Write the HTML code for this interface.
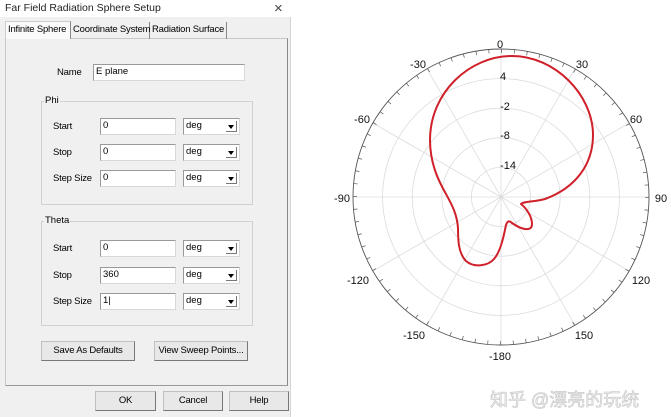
<!DOCTYPE html>
<html><head><meta charset="utf-8"><style>
*{margin:0;padding:0;box-sizing:border-box}
body{width:671px;height:417px;background:#fff;position:relative;overflow:hidden;font-family:"Liberation Sans",Arial,sans-serif;font-size:10px;color:#000}
.a{position:absolute;white-space:nowrap}
.dlg{left:0;top:17px;width:291px;height:400px;background:#f0f0f0;border-right:1px solid #d4d4d4}
.panel{left:5px;top:38px;width:283px;height:348px;border:1px solid #c8c8c8;border-right:1px solid #888;border-bottom:1px solid #999;background:#f0f0f0}
.tab{top:22px;height:17px;font-size:9.5px;letter-spacing:-0.2px;line-height:16px;padding-left:2px;border-right:1px solid #888}
.inp{height:17px;background:#fff;border:1px solid #d8d8d8;border-left:1px solid #999;border-top:1px solid #999;font-size:9.5px;line-height:14px;padding-left:2px}
.cmb{width:57px;height:17px;background:#fff;border:1px solid #d8d8d8;border-left:1px solid #999;border-top:1px solid #999;font-size:9.5px;line-height:14px;padding-left:2px}
.cmb i{position:absolute;right:2px;top:2px;width:11px;height:11px;border-bottom:1px solid #777;border-right:1px solid #777}
.cmb i:after{content:"";position:absolute;left:2px;top:4px;border-left:3.5px solid transparent;border-right:3.5px solid transparent;border-top:4px solid #000}
.lbl{font-size:9.5px;letter-spacing:-0.2px}
.grp{border:1px solid #d0d0d0}
.gt{font-size:9.5px;background:#f0f0f0;padding:0 1px}
.btn{height:20px;background:#e8e8e8;border:1px solid #c0c0c0;border-right:1px solid #777;border-bottom:1px solid #777;font-size:9.5px;letter-spacing:-0.2px;text-align:center;line-height:18px}
</style></head><body>
<div class="a" style="left:5px;top:2px;font-size:10.5px;color:#222">Far Field Radiation Sphere Setup</div>
<div class="a" style="left:274px;top:0px;font-size:15px;color:#444">×</div>
<div class="a dlg"></div>
<div class="a panel"></div>
<div class="a tab" style="left:5px;width:66px;background:#fafafa;top:21px;height:18px;border-left:1px solid #ccc;border-top:1px solid #ccc">Infinite Sphere</div>
<div class="a tab" style="left:71px;width:79px">Coordinate System</div>
<div class="a tab" style="left:150px;width:77px">Radiation Surface</div>
<div class="a lbl" style="left:57px;top:67px">Name</div>
<div class="a inp" style="left:93px;top:64px;width:152px">E plane</div>

<div class="a grp" style="left:41px;top:101px;width:212px;height:104px"></div>
<div class="a gt" style="left:44px;top:95px">Phi</div>
<div class="a lbl" style="left:53px;top:121px">Start</div>
<div class="a inp" style="left:100px;top:118px;width:76px">0</div>
<div class="a cmb" style="left:183px;top:118px">deg<i></i></div>
<div class="a lbl" style="left:53px;top:147px">Stop</div>
<div class="a inp" style="left:100px;top:144px;width:76px">0</div>
<div class="a cmb" style="left:183px;top:144px">deg<i></i></div>
<div class="a lbl" style="left:53px;top:173px">Step Size</div>
<div class="a inp" style="left:100px;top:170px;width:76px">0</div>
<div class="a cmb" style="left:183px;top:170px">deg<i></i></div>

<div class="a grp" style="left:41px;top:221px;width:212px;height:105px"></div>
<div class="a gt" style="left:44px;top:215px">Theta</div>
<div class="a lbl" style="left:53px;top:243px">Start</div>
<div class="a inp" style="left:100px;top:240px;width:76px">0</div>
<div class="a cmb" style="left:183px;top:240px">deg<i></i></div>
<div class="a lbl" style="left:53px;top:270px">Stop</div>
<div class="a inp" style="left:100px;top:267px;width:76px">360</div>
<div class="a cmb" style="left:183px;top:267px">deg<i></i></div>
<div class="a lbl" style="left:53px;top:296px">Step Size</div>
<div class="a inp" style="left:100px;top:293px;width:76px">1|</div>
<div class="a cmb" style="left:183px;top:293px">deg<i></i></div>

<div class="a btn" style="left:41px;top:341px;width:94px">Save As Defaults</div>
<div class="a btn" style="left:154px;top:341px;width:94px">View Sweep Points...</div>
<div class="a btn" style="left:95px;top:391px;width:61px">OK</div>
<div class="a btn" style="left:163px;top:391px;width:60px">Cancel</div>
<div class="a btn" style="left:229px;top:391px;width:60px">Help</div>

<svg class="a" style="left:0;top:0" width="671" height="417" viewBox="0 0 671 417">
<g fill="none" stroke="#dcdcdc" stroke-width="0.8">
<circle cx="501" cy="197" r="118.4"/><circle cx="501" cy="197" r="88.8"/><circle cx="501" cy="197" r="59.2"/><circle cx="501" cy="197" r="29.6"/>
<line x1="501" y1="49" x2="501" y2="345"/><line x1="353" y1="197" x2="649" y2="197"/>
<line x1="427" y1="68.8" x2="575" y2="325.2"/><line x1="575" y1="68.8" x2="427" y2="325.2"/>
<line x1="372.8" y1="123" x2="629.2" y2="271"/><line x1="629.2" y1="123" x2="372.8" y2="271"/>
</g>
<circle cx="501" cy="197" r="148" fill="none" stroke="#555" stroke-width="0.9"/>
<circle cx="501" cy="197" r="146" fill="none" stroke="#555" stroke-width="4" stroke-dasharray="0.7 12.041"/>
<path fill="none" stroke="#d0202a" stroke-width="2" stroke-linejoin="round" d="M512,56 C555,56 593,95 593,135 C593,165 575,188 545,199 C535,202 524,201 521,204 C526,208 532,216 532,224 C532,232 522,230 512,223 Q508,219 506,225 C503,240 500,252 494,259 C488,266 474,268 466,261 C458,253 458,238 458,228 C457,214 452,205 446,194 C438,180 430,163 430,140 C430,92 470,56 512,56 Z"/>
<g font-family="Liberation Sans,Arial,sans-serif" font-size="11" fill="#111" text-anchor="middle">
<text x="500" y="48">0</text>
<text x="418" y="68">-30</text><text x="582" y="68">30</text>
<text x="362" y="123">-60</text><text x="636" y="123">60</text>
<text x="342" y="202">-90</text><text x="661" y="202">90</text>
<text x="358" y="284">-120</text><text x="641" y="284">120</text>
<text x="414" y="339">-150</text><text x="584" y="339">150</text>
<text x="500" y="360">-180</text>
<text x="503" y="80">4</text><text x="505" y="110">-2</text><text x="505" y="139">-8</text><text x="508" y="169">-14</text>
</g>
<text x="490" y="406" font-family="Liberation Sans,Noto Sans CJK SC,sans-serif" font-size="18" fill="#f2f2f2" stroke="#c4c4c4" stroke-width="0.6">知乎 @漂亮的玩统</text>
</svg>
</body></html>
